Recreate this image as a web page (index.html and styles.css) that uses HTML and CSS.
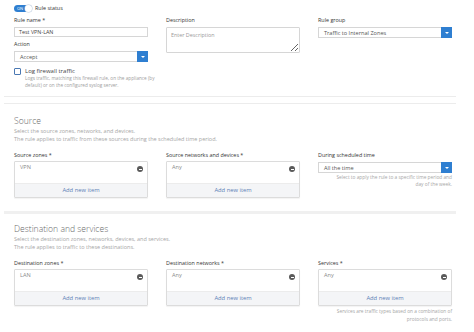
FILE: index.html
```html
<!DOCTYPE html>
<html lang="en">
<head>
    <meta charset="UTF-8">
    <meta name="viewport" content="width=device-width, initial-scale=1.0">
    <title>Firewall rule</title>
    <link rel="stylesheet" href="styles.css">
</head>
<body>
    <div class="page">
        <div class="card card-top">
            <div class="status-row">
                <span class="toggle"><span class="toggle-text">ON</span><span class="knob"></span></span>
                <span class="label">Rule status</span>
            </div>
            <div class="grid grid-top">
                <div class="col">
                    <div class="label">Rule name *</div>
                    <div class="input">Test VPN-LAN</div>
                    <div class="label label-gap">Action</div>
                    <div class="select">
                        <span class="select-text">Accept</span>
                        <span class="select-btn"><span class="caret"></span></span>
                    </div>
                    <div class="check-row">
                        <span class="checkbox"></span>
                        <span class="check-label">Log firewall traffic</span>
                    </div>
                    <div class="check-help">Logs traffic, matching this firewall rule, on the appliance (by default) or on the configured syslog server.</div>
                </div>
                <div class="col">
                    <div class="label">Description</div>
                    <textarea class="textarea" placeholder="Enter Description"></textarea>
                </div>
                <div class="col">
                    <div class="label">Rule group</div>
                    <div class="select">
                        <span class="select-text">Traffic to Internal Zones</span>
                        <span class="select-btn"><span class="caret"></span></span>
                    </div>
                </div>
            </div>
        </div>

        <div class="card card-source">
            <h2 class="heading">Source</h2>
            <p class="desc">Select the source zones, networks, and devices.</p>
            <p class="desc">The rule applies to traffic from these sources during the scheduled time period.</p>
            <div class="grid grid-list">
                <div class="col">
                    <div class="label">Source zones *</div>
                    <div class="list">
                        <div class="list-item"><span>VPN</span><span class="minus"></span></div>
                        <div class="list-add">Add new item</div>
                    </div>
                </div>
                <div class="col">
                    <div class="label">Source networks and devices *</div>
                    <div class="list">
                        <div class="list-item"><span>Any</span><span class="minus"></span></div>
                        <div class="list-add">Add new item</div>
                    </div>
                </div>
                <div class="col">
                    <div class="label">During scheduled time</div>
                    <div class="select">
                        <span class="select-text">All the time</span>
                        <span class="select-btn"><span class="caret"></span></span>
                    </div>
                    <div class="help help-schedule">Select to apply the rule to a specific time period and day of the week.</div>
                </div>
            </div>
        </div>

        <div class="card card-dest">
            <h2 class="heading">Destination and services</h2>
            <p class="desc">Select the destination zones, networks, devices, and services.</p>
            <p class="desc">The rule applies to traffic to these destinations.</p>
            <div class="grid grid-list">
                <div class="col">
                    <div class="label">Destination zones *</div>
                    <div class="list">
                        <div class="list-item"><span>LAN</span><span class="minus"></span></div>
                        <div class="list-add">Add new item</div>
                    </div>
                </div>
                <div class="col">
                    <div class="label">Destination networks *</div>
                    <div class="list">
                        <div class="list-item"><span>Any</span><span class="minus"></span></div>
                        <div class="list-add">Add new item</div>
                    </div>
                </div>
                <div class="col">
                    <div class="label">Services *</div>
                    <div class="list">
                        <div class="list-item"><span>Any</span><span class="minus"></span></div>
                        <div class="list-add">Add new item</div>
                    </div>
                    <div class="help help-services">Services are traffic types based on a combination of protocols and ports.</div>
                </div>
            </div>
        </div>
    </div>
</body>
</html>
```

FILE: styles.css
```css
body {
    margin: 0;
    background-color: #ffffff;
    font-family: 'Open Sans', 'Liberation Sans', sans-serif;
    color: #333333;
}

.page {
    width: 452px;
    margin-left: 4px;
}

.card {
    background-color: #ffffff;
    padding: 0 10px;
}

.card-top {
    height: 96px;
    border-bottom: 1px solid #ececec;
    margin-bottom: 6px;
}

.card-source {
    border-top: 1px solid #ececec;
    padding-top: 12px;
    padding-bottom: 13px;
    border-bottom: 3px solid #f0f0f0;
}

.card-dest {
    padding-top: 10px;
}

.status-row {
    display: flex;
    align-items: center;
    gap: 3px;
    height: 8px;
    padding-top: 4px;
}

.toggle {
    position: relative;
    width: 18px;
    height: 7px;
    border-radius: 4px;
    background-color: #2f7fd1;
    display: block;
}

.toggle-text {
    position: absolute;
    left: 3px;
    top: 1px;
    font-size: 4px;
    line-height: 5px;
    color: #ffffff;
}

.knob {
    position: absolute;
    right: 0;
    top: 0;
    width: 7px;
    height: 7px;
    border-radius: 50%;
    background-color: #ffffff;
    box-shadow: 0 0 0 0.5px #b9c9dc;
}

.label {
    font-size: 5.4px;
    line-height: 7px;
    color: #333333;
    white-space: nowrap;
}

.label-gap {
    margin-top: 4px;
}

.grid {
    display: grid;
    grid-template-columns: 134px 134px 134px;
    column-gap: 18px;
}

.grid-top {
    margin-top: 5px;
}

.grid-list {
    margin-top: 9px;
}

.input {
    margin-top: 3px;
    height: 10px;
    border: 1px solid #d6d6d6;
    box-sizing: border-box;
    font-size: 5.4px;
    line-height: 8px;
    padding-left: 4px;
    color: #444444;
}

.select {
    margin-top: 3px;
    height: 11px;
    border: 1px solid #d6d6d6;
    box-sizing: border-box;
    display: flex;
    align-items: center;
    justify-content: space-between;
}

.select-text {
    font-size: 5.6px;
    padding-left: 5px;
    color: #555555;
}

.select-btn {
    width: 11px;
    height: 11px;
    margin: -1px -1px -1px 0;
    background-color: #2f7fd1;
    display: flex;
    align-items: center;
    justify-content: center;
}

.caret {
    width: 0;
    height: 0;
    border-left: 2px solid transparent;
    border-right: 2px solid transparent;
    border-top: 2px solid #ffffff;
}

.check-row {
    display: flex;
    align-items: center;
    gap: 4px;
    margin-top: 5px;
}

.checkbox {
    width: 7px;
    height: 7px;
    border: 1px solid #4a78b3;
    box-sizing: border-box;
    border-radius: 1px;
    background-color: #ffffff;
}

.check-label {
    font-size: 6px;
    line-height: 8px;
    color: #444444;
}

.check-help {
    padding-left: 11px;
    font-size: 4.7px;
    line-height: 7px;
    color: #a0a0a0;
    width: 140px;
}

.textarea {
    display: block;
    margin-top: 3px;
    width: 134px;
    height: 26px;
    box-sizing: border-box;
    border: 1px solid #d6d6d6;
    border-radius: 1px;
    font-family: 'Open Sans', 'Liberation Sans', sans-serif;
    font-size: 5.4px;
    padding: 3px 4px;
    margin-bottom: 0;
}

.textarea::placeholder {
    color: #9a9a9a;
}

.heading {
    margin: 0;
    font-size: 8.6px;
    font-weight: 300;
    line-height: 11px;
    color: #6a6a6a;
}

.desc {
    margin: 0;
    font-size: 5.5px;
    line-height: 8px;
    color: #a6a6a6;
    white-space: nowrap;
}

.list {
    margin-top: 2px;
    height: 37px;
    border: 1px solid #dcdcdc;
    box-sizing: border-box;
    display: flex;
    flex-direction: column;
    border-radius: 1px;
    box-shadow: 0 1px 1px rgba(0, 0, 0, 0.05);
}

.list-item {
    flex: 1;
    display: flex;
    justify-content: space-between;
    align-items: flex-start;
    padding: 2px 4px 0 5px;
    font-size: 5.6px;
    line-height: 7px;
    color: #8a8a8a;
}

.minus {
    position: relative;
    width: 6px;
    height: 6px;
    margin-top: 2px;
    border-radius: 50%;
    background-color: #5a5a5a;
}

.minus::after {
    content: '';
    position: absolute;
    left: 1.5px;
    top: 2.5px;
    width: 3px;
    height: 1px;
    background-color: #ffffff;
}

.list-add {
    height: 14px;
    background-color: #f4f5f7;
    border-top: 1px solid #ececec;
    box-sizing: border-box;
    text-align: center;
    font-size: 5.8px;
    line-height: 13px;
    color: #5b80b6;
}

.help {
    text-align: right;
    font-size: 4.8px;
    color: #a6a6a6;
}

.help-schedule {
    margin-top: 1px;
    line-height: 7px;
    padding-left: 14px;
}

.help-services {
    margin-top: 1px;
    line-height: 8px;
    padding-left: 12px;
}
```
